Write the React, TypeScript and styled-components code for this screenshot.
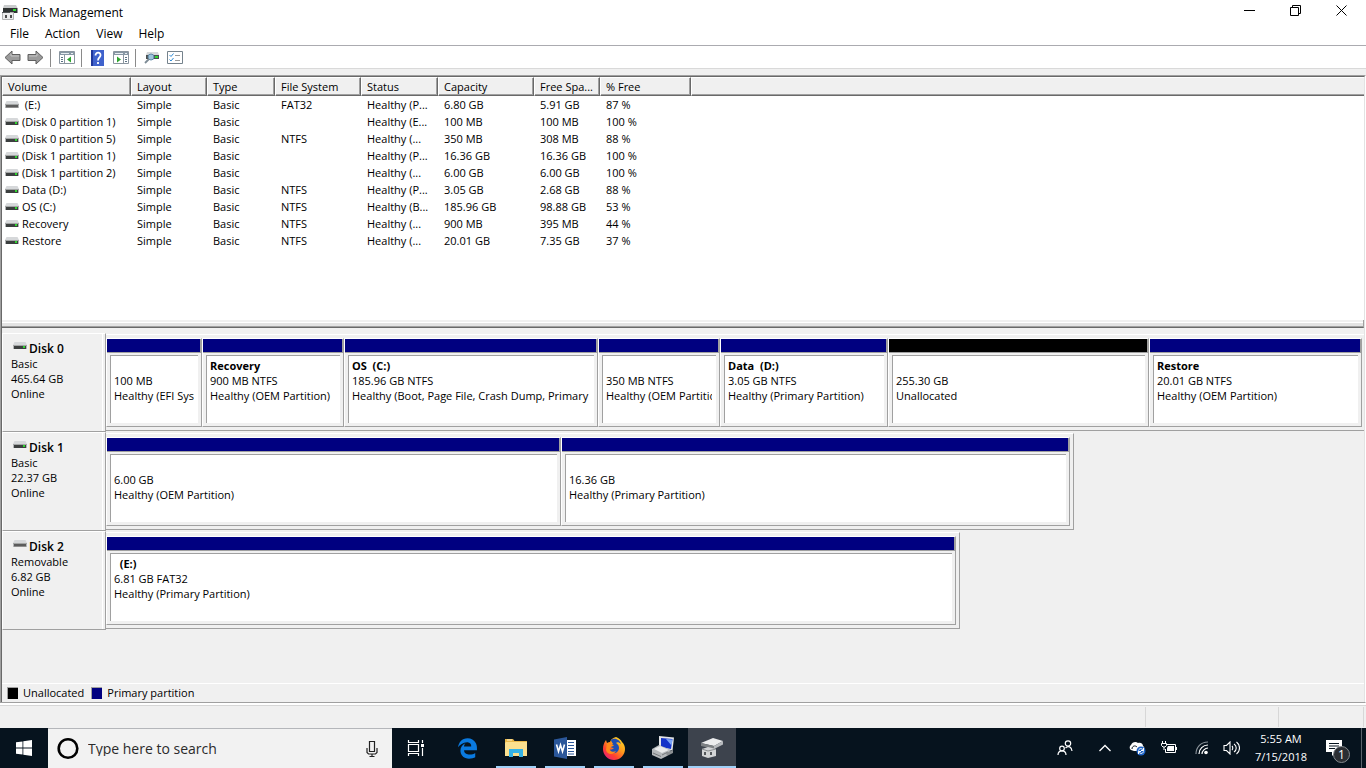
import React from "react";
import styled, { createGlobalStyle, css } from "styled-components";
import { FaEdgeLegacy } from "react-icons/fa6";

const FACE = "#f0f0f0";
const SHADOW = "#a0a0a0";
const DARK = "#696969";
const LIGHT = "#e3e3e3";
const NAVY = "#000080";

const GlobalStyle = createGlobalStyle`
  *, *::before, *::after { box-sizing: border-box; }
  body {
    margin: 0;
    background: ${FACE};
    color: #000;
    font: 11px/15px "Open Sans", "Noto Sans", sans-serif;
  }
  button, input { font: inherit; color: inherit; border: 0; padding: 0; background: none; }
  svg { display: block; }
`;

const Screen = styled.div`
  display: flex;
  flex-direction: column;
  min-height: 100vh;
`;

/* Title bar */
const TitleBar = styled.header`
  display: flex;
  align-items: center;
  height: 24px;
  padding: 0 2px;
  background: #fff;
`;
const Title = styled.h1`
  flex: 1;
  margin: 0 0 0 4px;
  font-size: 12px;
  font-weight: 400;
`;
const CaptionButton = styled.button`
  display: grid;
  place-items: center;
  width: 46px;
  height: 20px;
  margin-bottom: 4px;
`;

/* Menu and toolbar */
const MenuBar = styled.nav`
  display: flex;
  height: 22px;
  padding-left: 2px;
  background: #fff;
  border-bottom: 1px solid #ababb0;
`;
const MenuItem = styled.button`
  padding: 0 8px 2px;
  font-size: 12px;
`;
const Toolbar = styled.div`
  display: flex;
  align-items: center;
  height: 23px;
  padding: 1px 0 0 1px;
  background: #fff;
  border-bottom: 1px solid #d9d9d9;
`;
const ToolButton = styled.button`
  display: grid;
  place-items: center;
  width: 23px;
  height: 22px;
`;
const ToolSeparator = styled.span`
  width: 1px;
  height: 18px;
  margin: 0 4px 0 3px;
  background: #8a8a8a;
`;

/* Framed content */
const Frame = styled.main`
  flex: 1;
  display: flex;
  margin-top: 6px;
  border: solid;
  border-width: 1px;
  border-color: ${SHADOW} #fff ${SHADOW} ${SHADOW};
`;
const FrameInner = styled.div`
  flex: 1;
  min-width: 0;
  display: flex;
  flex-direction: column;
  border: solid;
  border-width: 1px 1px 0;
  border-color: ${DARK} ${LIGHT} ${LIGHT} ${DARK};
`;
const ListPane = styled.section`
  min-height: 243px;
  background: #fff;
`;
const Splitter = styled.div`
  height: 8px;
  margin-bottom: 5px;
  border-right: 1px solid ${SHADOW};
  border-bottom: 1px solid ${DARK};
  background: linear-gradient(${FACE} 0 2px, #fff 2px 3px, ${LIGHT} 3px 6px, ${SHADOW} 6px);
`;

/* Volume table */
const VolumeTable = styled.table`
  width: 100%;
  table-layout: fixed;
  border-collapse: separate;
  border-spacing: 0;
`;
const Column = styled.col<{ $width?: number }>`
  width: ${(p) => (p.$width ? `${p.$width}px` : "auto")};
`;
const HeaderCell = styled.th`
  height: 19px;
  padding: 0 0 1px 5px;
  overflow: hidden;
  text-align: left;
  font-weight: 400;
  white-space: nowrap;
  background: ${FACE};
  border-top: 1px solid #fff;
  border-left: 1px solid #fff;
  border-right: 1px solid ${DARK};
  border-bottom: 1px solid ${DARK};
  box-shadow: inset -1px -1px ${SHADOW};
  &:last-child { border-right: 0; box-shadow: inset 0 -1px ${SHADOW}; }
`;
const Cell = styled.td`
  height: 17px;
  padding: 0 0 0 6px;
  overflow: hidden;
  white-space: nowrap;
  &:first-child { padding-left: 3px; }
`;
const VolumeName = styled.span`
  display: flex;
  align-items: center;
  gap: 3px;
  white-space: pre;
`;

/* Disk map */
const DiskPane = styled.section`
  flex: 1;
  display: flex;
  flex-direction: column;
  background: ${FACE};
`;
const DiskRow = styled.article<{ $share: number; $spare: number }>`
  display: grid;
  grid-template-columns: 104px minmax(0, ${(p) => p.$share}fr) ${(p) => p.$spare > 0 && `minmax(0, ${p.$spare}fr)`};
  height: 99px;
`;
const DiskHead = styled.div`
  padding: 7px 0 0 8px;
  border: 1px solid #fff;
  border-right-color: ${SHADOW};
  border-bottom-color: ${SHADOW};
  box-shadow: inset -2px 0 ${FACE}, inset -3px 0 #fff;
`;
const DiskTitle = styled.h2`
  display: flex;
  gap: 2px;
  margin: 0;
  padding-left: 2px;
  font-size: 12px;
  font-weight: 600;
  svg { margin-top: 1px; }
`;
const HeadLine = styled.div``;
const Graph = styled.div<{ $columns: string; $full: boolean }>`
  display: grid;
  grid-template-columns: ${(p) => p.$columns};
  height: 97px;
  margin-top: 1px;
  padding: 3px 3px 3px 0;
  border-top: 1px solid #fff;
  border-right: 1px solid ${SHADOW};
  border-bottom: 1px solid ${SHADOW};
  ${(p) => p.$full && css`border-right: 0; padding-right: 2px;`}
`;
const Partition = styled.div`
  min-width: 0;
  display: flex;
  flex-direction: column;
  border: 1px solid #fff;
  border-right-color: ${SHADOW};
  border-bottom-color: ${SHADOW};
`;
const Bar = styled.div<{ $color: string }>`
  height: 14px;
  background: ${(p) => p.$color};
  border-right: 1px solid ${SHADOW};
  border-bottom: 1px solid ${SHADOW};
`;
const Box = styled.div`
  flex: 1;
  margin: 2px 3px 3px;
  padding: 2px 4px 0 3px;
  background: #fff;
  border-top: 1px solid ${SHADOW};
  border-left: 1px solid ${SHADOW};
`;
const BoxLine = styled.div<{ $bold?: boolean }>`
  height: 15px;
  overflow: hidden;
  white-space: pre;
  font-weight: ${(p) => (p.$bold ? 700 : 400)};
`;

const Legend = styled.footer`
  display: flex;
  align-items: center;
  height: 19px;
  margin-top: auto;
  padding: 0 0 1px 5px;
  border-top: 1px solid #fff;
`;
const LegendItem = styled.span`
  display: flex;
  align-items: center;
  gap: 5px;
  margin-right: 7px;
`;
const Swatch = styled.span<{ $color: string }>`
  width: 11px;
  height: 12px;
  background: ${(p) => p.$color};
  border: 1px solid ${SHADOW};
  border-width: 1px 0 0 1px;
`;

const StatusBar = styled.div`
  display: flex;
  justify-content: flex-end;
  height: 25px;
  padding: 2px 2px 1px 0;
  border-top: 2px solid #fff;
  box-shadow: inset 0 1px #d7d7d7;
`;
const StatusCell = styled.span<{ $width: number }>`
  width: ${(p) => p.$width}px;
  border-right: 1px solid #d7d7d7;
`;

/* Taskbar */
const Taskbar = styled.footer`
  display: flex;
  height: 40px;
  background: #06131e;
  color: #fff;
`;
const StartButton = styled.button`
  display: grid;
  place-items: center;
  width: 48px;
`;
const Search = styled.label`
  display: flex;
  align-items: center;
  width: 344px;
  padding: 0 13px 0 8px;
  background: #f2f2f2;
  border-top: 1px solid #b4b6ba;
`;
const SearchInput = styled.input`
  flex: 1;
  min-width: 0;
  margin-left: 8px;
  font-size: 14px;
  color: #2b2b2b;
  &::placeholder { color: #2b2b2b; opacity: 1; }
`;
const Apps = styled.div`
  display: flex;
  flex: 1;
  gap: 1px;
`;
const AppButton = styled.button<{ $state?: "open" | "active" }>`
  display: flex;
  flex-direction: column;
  align-items: center;
  justify-content: center;
  width: 48px;
  padding-top: 2px;
  background: ${(p) => (p.$state === "active" ? "#3d434d" : "transparent")};
  &:first-child { margin-right: 2px; }
  &::after {
    content: "";
    order: 2;
    width: ${(p) => (p.$state === "active" ? "48px" : "40px")};
    height: 2px;
    background: ${(p) => (p.$state ? "#9fd0f8" : "transparent")};
  }
`;
const AppIcon = styled.span`
  flex: 1;
  display: grid;
  place-items: center;
`;
const Tray = styled.div`
  display: flex;
  align-items: center;
`;
const TrayButton = styled.button<{ $width: number }>`
  display: grid;
  place-items: center;
  width: ${(p) => p.$width}px;
  height: 40px;
`;
const Clock = styled.time`
  width: 72px;
  text-align: center;
  line-height: 18px;
`;
const ShowDesktop = styled.button`
  align-self: stretch;
  width: 5px;
  border-left: 1px solid #5a636c;
`;

/* Icons */
const DriveIcon = ({ removable = false }: { removable?: boolean }) => (
  <svg width="14" height="8" viewBox="0 0 14 8" aria-hidden="true">
    <path d="M1.500 0h11L14 3H0z" fill="#d6d8da" />
    <path d="M0 3h14v4H0z" fill={removable ? "#5c5c5c" : "#3c3f3f"} />
    <path d="M0 3h14v1H0z" fill="#a4a6a6" />
    <path d="M0 4h1v3H0zM13 4h1v3h-1z" fill="#b4b6b8" />
    {removable ? <path d="M1 6h12v1H1z" fill="#8e8e8e" /> : <path d="M10 4h2v2h-2z" fill="#2fd52f" />}
  </svg>
);

const TitleIcon = () => (
  <svg width="16" height="16" viewBox="0 0 16 16" aria-hidden="true">
    <path d="M2 1h12l1.500 3H1z" fill="#c9cbcc" />
    <path d="M1 4h14.500v5H1z" fill="#2f3232" />
    <path d="M11 5h3v2h-3z" fill="#2fd52f" />
    <path d="M.5 8.500h11v7H.5z" fill="#ececec" stroke="#b2b2b2" />
    <path d="M0 8h8v1H0z" fill="#55585a" />
    <path d="M3 11h2v3H3zM8 11h2v3H8z" fill="#4c4c4c" />
  </svg>
);

const Arrow = ({ flip = false }: { flip?: boolean }) => (
  <svg width="17" height="15" viewBox="0 0 17 15" aria-hidden="true">
    <path
      d={flip ? "M16 7.500L9 1v3.500H1v6h8V14z" : "M1 7.500L8 1v3.500h8v6H8V14z"}
      fill="#9b9b9b"
      stroke="#5f5f5f"
      strokeLinejoin="round"
    />
    <path d={flip ? "M2 6h8V3.500" : "M15 6H7V3.500"} fill="none" stroke="#c4c4c4" />
  </svg>
);

const ConsoleIcon = ({ flip = false }: { flip?: boolean }) => (
  <svg width="16" height="13" viewBox="0 0 16 13" aria-hidden="true">
    <path d="M.5.5h15v12H.5z" fill="#fff" stroke="#8a959f" />
    <path d="M1 1h14v3H1z" fill="#8797a4" />
    <path d="M2 2.500h8M12 2.500h2" stroke="#e8edf1" />
    <path d={flip ? "M10.500 4v8" : "M5.500 4v8"} stroke="#8a959f" />
    <path d={flip ? "M12 6.500h2M12 8.500h2M12 10.500h2" : "M2 6.500h2M2 8.500h2M2 10.500h2"} stroke="#5b7385" />
    <path d={flip ? "M4 5.500l4 3-4 3z" : "M12 5.500l-4 3 4 3z"} fill="#2ea52e" />
  </svg>
);

const HelpIcon = () => (
  <svg width="13" height="16" viewBox="0 0 13 16" aria-hidden="true">
    <path d="M0 0h13v16H0z" fill="#3f62cc" />
    <path d="M0 0h2v16H0z" fill="#20379a" />
    <path d="M4.500 5.500c0-4 5.500-3.500 5 0-.2 2-2.500 2-2.500 5M7 12v2" fill="none" stroke="#fff" strokeWidth="1.800" />
  </svg>
);

const RescanIcon = () => (
  <svg width="16" height="13" viewBox="0 0 16 13" aria-hidden="true">
    <path d="M3 1h11l1 3H2z" fill="#d5d8da" />
    <path d="M2 4h13v4H2z" fill="#4b4f50" />
    <path d="M11 5h3v2h-3z" fill="#2fd52f" />
    <circle cx="7" cy="6" r="3" fill="#9ec4dc" stroke="#5d87a5" />
    <path d="M5 8l-4 4" stroke="#7d8b95" strokeWidth="1.800" />
  </svg>
);

const SettingsListIcon = () => (
  <svg width="16" height="13" viewBox="0 0 16 13" aria-hidden="true">
    <path d="M.5.5h15v12H.5z" fill="#fff" stroke="#75828c" />
    <path d="M2.500 4l1.500 1.500L6.500 2.500M2.500 8.500L4 10l2.500-3" fill="none" stroke="#2f8bd6" />
    <path d="M8 4.500h5M8 9.500h5" stroke="#9a9a9a" />
  </svg>
);

const ExplorerIcon = () => (
  <svg width="22" height="20" viewBox="0 0 22 20" aria-hidden="true">
    <path d="M0 1h8l1.500 2H22v15H0z" fill="#e9b84a" />
    <path d="M1 4h21v14H0V5z" fill="#fbe08f" />
    <path d="M2 2h5" stroke="#fff4cc" />
    <path d="M4 19v-8h14v8h-4v-4H8v4z" fill="#35b3e6" />
  </svg>
);

const WordIcon = () => (
  <svg width="22" height="22" viewBox="0 0 22 22" aria-hidden="true">
    <path d="M11 3h11v16H11z" fill="#fff" />
    <path d="M14 5.500h6M14 8.500h6M14 11.500h6M14 14.500h6M14 17h6" stroke="#2b579a" />
    <path d="M0 2.500L13 0v22L0 19.500z" fill="#2b579a" />
    <path d="M2.500 7.500l2 7 2-6.500 2 6.500 2-7" fill="none" stroke="#fff" strokeWidth="1.600" />
  </svg>
);

const FirefoxIcon = () => (
  <svg width="24" height="24" viewBox="0 0 24 24" aria-hidden="true">
    <defs>
      <linearGradient id="fox" x1="1" y1="0" x2="0.200" y2="1">
        <stop offset="0" stopColor="#ffe92b" />
        <stop offset="0.450" stopColor="#ff9a1c" />
        <stop offset="0.750" stopColor="#ff4030" />
        <stop offset="1" stopColor="#e6207a" />
      </linearGradient>
    </defs>
    <path d="M14 1c3 1 5 3 6 5 2 2 3 4 3 7a11 11 0 0 1-22 0c0-4 1-6 3-9l1 3 3-1c1-3 3-4 6-5z" fill="url(#fox)" />
    <path d="M9 4c4-3 9 0 10 4-2-2-4-2-5-1 3 2 4 5 2 8-3 4-9 2-9-2 1 1 3 1 5-1-3 0-4-1-3-3l2-1c-1-2-2-3-2-4z" fill="#1f4fb4" />
    <path d="M5 7l4-1c0 2 1 3 3 3-1 2-3 1-4 3-1 3 3 5 6 3-2 4-9 4-10-1z" fill="#ff8a1a" />
  </svg>
);

const ComputerIcon = () => (
  <svg width="24" height="24" viewBox="0 0 24 24" aria-hidden="true">
    <path d="M8 0l15 1.500-1.500 13L8 12z" fill="#e4e6e8" />
    <path d="M10 2l11.500 1-1.500 10-10-2z" fill="#1533c8" />
    <path d="M15 3l6.500.5-1 6z" fill="#7aa4f5" />
    <path d="M1 13l7-4 12 5-4 6-6 3-9-4z" fill="#b4b8bb" />
    <path d="M3 13l6-3 9 4-7 3z" fill="#e9ebec" />
    <path d="M2 17l8 3.500M11 19l6-3" stroke="#75797c" />
    <path d="M15 17l7-3v3l-6 3z" fill="#8c9093" />
  </svg>
);

const DiskAppIcon = () => (
  <svg width="24" height="22" viewBox="0 0 24 22" aria-hidden="true">
    <path d="M1 6l12-5 10 3-9 5z" fill="#ecedee" />
    <path d="M1 6l13 3v3L1 9z" fill="#7d8184" />
    <path d="M14 9l9-5v3.500L14 12z" fill="#b7babd" />
    <path d="M2 12l6-2 8 2v7l-8 2-6-2z" fill="#d2d4d6" />
    <path d="M2 12l6 2 8-2" fill="none" stroke="#8b8f92" />
    <path d="M4 15h2v3H4zM10 15h2v3h-2z" fill="#54585b" />
  </svg>
);

/* Data */
const columns: [string, number?][] = [
  ["Volume", 129],
  ["Layout", 76],
  ["Type", 68],
  ["File System", 86],
  ["Status", 77],
  ["Capacity", 96],
  ["Free Spa...", 66],
  ["% Free", 91],
  [""],
];

const volumes = [
  [" (E:)", "FAT32", "Healthy (P...", "6.80 GB", "5.91 GB", "87 %"],
  ["(Disk 0 partition 1)", "", "Healthy (E...", "100 MB", "100 MB", "100 %"],
  ["(Disk 0 partition 5)", "NTFS", "Healthy (...", "350 MB", "308 MB", "88 %"],
  ["(Disk 1 partition 1)", "", "Healthy (P...", "16.36 GB", "16.36 GB", "100 %"],
  ["(Disk 1 partition 2)", "", "Healthy (...", "6.00 GB", "6.00 GB", "100 %"],
  ["Data (D:)", "NTFS", "Healthy (P...", "3.05 GB", "2.68 GB", "88 %"],
  ["OS (C:)", "NTFS", "Healthy (B...", "185.96 GB", "98.88 GB", "53 %"],
  ["Recovery", "NTFS", "Healthy (...", "900 MB", "395 MB", "44 %"],
  ["Restore", "NTFS", "Healthy (...", "20.01 GB", "7.35 GB", "37 %"],
];

interface PartitionData {
  share: number;
  name: string;
  size: string;
  status: string;
  free?: boolean;
}
interface DiskData {
  name: string;
  kind: string;
  size: string;
  share: number;
  partitions: PartitionData[];
}

const FULL_SHARE = 1258;

const disks: DiskData[] = [
  {
    name: "Disk 0",
    kind: "Basic",
    size: "465.64 GB",
    share: FULL_SHARE,
    partitions: [
      { share: 96, name: "", size: "100 MB", status: "Healthy (EFI System Partition)" },
      { share: 142, name: "Recovery", size: "900 MB NTFS", status: "Healthy (OEM Partition)" },
      { share: 254, name: "OS  (C:)", size: "185.96 GB NTFS", status: "Healthy (Boot, Page File, Crash Dump, Primary Partition)" },
      { share: 122, name: "", size: "350 MB NTFS", status: "Healthy (OEM Partition)" },
      { share: 168, name: "Data  (D:)", size: "3.05 GB NTFS", status: "Healthy (Primary Partition)" },
      { share: 261, name: "", size: "255.30 GB", status: "Unallocated", free: true },
      { share: 213, name: "Restore", size: "20.01 GB NTFS", status: "Healthy (OEM Partition)" },
    ],
  },
  {
    name: "Disk 1",
    kind: "Basic",
    size: "22.37 GB",
    share: 968,
    partitions: [
      { share: 455, name: "", size: "6.00 GB", status: "Healthy (OEM Partition)" },
      { share: 509, name: "", size: "16.36 GB", status: "Healthy (Primary Partition)" },
    ],
  },
  {
    name: "Disk 2",
    kind: "Removable",
    size: "6.82 GB",
    share: 854,
    partitions: [{ share: 850, name: "  (E:)", size: "6.81 GB FAT32", status: "Healthy (Primary Partition)" }],
  },
];

const Disk = ({ disk }: { disk: DiskData }) => (
  <DiskRow $share={disk.share} $spare={FULL_SHARE - disk.share}>
    <DiskHead>
      <DiskTitle>
        <DriveIcon removable={disk.kind === "Removable"} />
        {disk.name}
      </DiskTitle>
      <HeadLine>{disk.kind}</HeadLine>
      <HeadLine>{disk.size}</HeadLine>
      <HeadLine>Online</HeadLine>
    </DiskHead>
    <Graph
      $columns={disk.partitions.map((p) => `minmax(0, ${p.share}fr)`).join(" ")}
      $full={disk.share === FULL_SHARE}
    >
      {disk.partitions.map((p, i) => (
        <Partition key={i}>
          <Bar $color={p.free ? "#000" : NAVY} />
          <Box>
            <BoxLine $bold>{p.name}</BoxLine>
            <BoxLine>{p.size}</BoxLine>
            <BoxLine>{p.status}</BoxLine>
          </Box>
        </Partition>
      ))}
    </Graph>
  </DiskRow>
);

export default function App() {
  return (
    <Screen>
      <GlobalStyle />
      <TitleBar>
        <TitleIcon />
        <Title>Disk Management</Title>
        <CaptionButton aria-label="Minimize">
          <svg width="11" height="11" viewBox="0 0 11 11" stroke="#000"><path d="M0 5.500h11" /></svg>
        </CaptionButton>
        <CaptionButton aria-label="Restore">
          <svg width="11" height="11" viewBox="0 0 11 11" fill="none" stroke="#000">
            <path d="M.5 2.500h8v8h-8zM2.500 2.500v-2h8v8h-2" />
          </svg>
        </CaptionButton>
        <CaptionButton aria-label="Close">
          <svg width="11" height="11" viewBox="0 0 11 11" stroke="#000"><path d="M.5.5l10 10M10.500.5l-10 10" /></svg>
        </CaptionButton>
      </TitleBar>
      <MenuBar aria-label="Menu">
        {["File", "Action", "View", "Help"].map((m) => <MenuItem key={m}>{m}</MenuItem>)}
      </MenuBar>
      <Toolbar role="toolbar" aria-label="Tools">
        <ToolButton aria-label="Back"><Arrow /></ToolButton>
        <ToolButton aria-label="Forward"><Arrow flip /></ToolButton>
        <ToolSeparator />
        <ToolButton aria-label="Show console tree"><ConsoleIcon /></ToolButton>
        <ToolSeparator />
        <ToolButton aria-label="Help"><HelpIcon /></ToolButton>
        <ToolButton aria-label="Show action pane"><ConsoleIcon flip /></ToolButton>
        <ToolSeparator />
        <ToolButton aria-label="Rescan disks"><RescanIcon /></ToolButton>
        <ToolButton aria-label="Settings"><SettingsListIcon /></ToolButton>
      </Toolbar>

      <Frame>
        <FrameInner>
          <ListPane>
            <VolumeTable>
              <colgroup>
                {columns.map(([label, width]) => <Column key={label} $width={width} />)}
              </colgroup>
              <thead>
                <tr>{columns.map(([label]) => <HeaderCell key={label}>{label}</HeaderCell>)}</tr>
              </thead>
              <tbody>
                {volumes.map(([name, ...rest], i) => (
                  <tr key={name}>
                    <Cell><VolumeName><DriveIcon removable={i === 0} />{name}</VolumeName></Cell>
                    <Cell>Simple</Cell>
                    <Cell>Basic</Cell>
                    {rest.map((value, j) => <Cell key={j}>{value}</Cell>)}
                    <Cell />
                  </tr>
                ))}
              </tbody>
            </VolumeTable>
          </ListPane>
          <Splitter />
          <DiskPane>
            {disks.map((d) => <Disk key={d.name} disk={d} />)}
            <Legend>
              <LegendItem><Swatch $color="#000" />Unallocated</LegendItem>
              <LegendItem><Swatch $color={NAVY} />Primary partition</LegendItem>
            </Legend>
          </DiskPane>
        </FrameInner>
      </Frame>
      <StatusBar>
        <StatusCell $width={133} />
        <StatusCell $width={133} />
        <StatusCell $width={85} />
      </StatusBar>

      <Taskbar>
        <StartButton aria-label="Start">
          <svg width="16" height="16" viewBox="0 0 16 16" fill="#fff">
            <path d="M0 2.300l6.500-.9v6.200H0zM7.300 1.300L16 0v7.600H7.300zM0 8.400h6.500v6.200L0 13.700zM7.300 8.400H16V16l-8.700-1.300z" />
          </svg>
        </StartButton>
        <Search>
          <svg width="24" height="24" viewBox="0 0 24 24" fill="none" stroke="#000" strokeWidth="2.600" aria-hidden="true">
            <circle cx="12" cy="11.500" r="9.300" />
          </svg>
          <SearchInput type="text" aria-label="Search" placeholder="Type here to search" />
          <svg width="14" height="18" viewBox="0 0 14 18" fill="none" stroke="#222" strokeWidth="1.200" aria-hidden="true">
            <path d="M4.500 1.500h5v10h-5zM2 8v4.500l1.500 1.500h7l1.500-1.500V8M7 14v2.500M4.500 16.500h5" />
          </svg>
        </Search>
        <Apps>
          <AppButton aria-label="Task view">
            <AppIcon>
              <svg width="18" height="16" viewBox="0 0 18 16" fill="none" stroke="#fff" strokeWidth="1.200" aria-hidden="true">
                <path d="M1.500 4.500h10v7h-10zM1.500 0v2.500h10V0M1.500 16v-2.500h10V16M15.500 0v3M15.500 8v8" />
                <path d="M14 4h3v3h-3z" fill="#fff" stroke="none" />
              </svg>
            </AppIcon>
          </AppButton>
          <AppButton aria-label="Edge"><AppIcon><FaEdgeLegacy size={21} color="#0a7ae0" /></AppIcon></AppButton>
          <AppButton aria-label="File Explorer" $state="open"><AppIcon><ExplorerIcon /></AppIcon></AppButton>
          <AppButton aria-label="Word" $state="open"><AppIcon><WordIcon /></AppIcon></AppButton>
          <AppButton aria-label="Firefox" $state="open"><AppIcon><FirefoxIcon /></AppIcon></AppButton>
          <AppButton aria-label="Computer Management" $state="open"><AppIcon><ComputerIcon /></AppIcon></AppButton>
          <AppButton aria-label="Disk Management" $state="active"><AppIcon><DiskAppIcon /></AppIcon></AppButton>
        </Apps>
        <Tray>
          <TrayButton $width={44} aria-label="People">
            <svg width="16" height="16" viewBox="0 0 16 16" fill="none" stroke="#fff" strokeWidth="1.200">
              <circle cx="11" cy="3.500" r="2.700" />
              <circle cx="5" cy="8.500" r="2.300" />
              <path d="M1 15c0-5.500 8-5.500 8 0M8.500 8c3-3 6-1 6.500 3" />
            </svg>
          </TrayButton>
          <TrayButton $width={36} aria-label="Show hidden icons">
            <svg width="12" height="8" viewBox="0 0 12 8" fill="none" stroke="#fff" strokeWidth="1.300"><path d="M.5 7L6 1.500 11.500 7" /></svg>
          </TrayButton>
          <TrayButton $width={28} aria-label="OneDrive">
            <svg width="17" height="15" viewBox="0 0 17 15">
              <path d="M2 9a3 3 0 0 1 0-5C3 1 7 0 9 2c3-1 5 1 5 3 2 1 2 5-1 5H5z" fill="#fff" />
              <path d="M3 8c0-3 3-4 5-2" fill="none" stroke="#06131e" />
              <circle cx="12" cy="10" r="4.500" fill="#1d62c4" />
              <path d="M9.500 9.500c1-3 4-2 5 0M14.500 10.500c-1 3-4 2-5 0M14.500 7v2.500H12M9.500 13v-2.500H12" fill="none" stroke="#fff" />
            </svg>
          </TrayButton>
          <TrayButton $width={36} aria-label="Battery">
            <svg width="17" height="14" viewBox="0 0 17 14" fill="none" stroke="#fff">
              <path d="M6 3.500h8.500v8h-10V8M15.500 6v3" />
              <path d="M7 5h6v5H6V7z" fill="#fff" stroke="none" />
              <path d="M1.500 0v2M4.500 0v2M.5 2.500h5v2L4 6H2L.5 4.500zM3 6v3" />
            </svg>
          </TrayButton>
          <TrayButton $width={30} aria-label="Network">
            <svg width="14" height="14" viewBox="0 0 14 14" fill="none" stroke="#fff" strokeWidth="1.200">
              <path d="M1 13C1 6 6 1 13 1" stroke="#8b949b" />
              <path d="M4 13c0-5 4-9 9-9M7 13c0-3 3-6 6-6" />
              <circle cx="11" cy="11.500" r="1.800" fill="#fff" stroke="none" />
            </svg>
          </TrayButton>
          <TrayButton $width={28} aria-label="Volume">
            <svg width="17" height="14" viewBox="0 0 17 14" fill="none" stroke="#fff" strokeWidth="1.100">
              <path d="M1 4.500h2.500L7 1v12L3.500 9.500H1zM9 5c1 1 1 3 0 4M11 3c3 2 3 6 0 8M13.500 1c4 3 4 9 0 12" />
            </svg>
          </TrayButton>
          <Clock dateTime="2018-07-15T05:55">5:55 AM<br />7/15/2018</Clock>
          <TrayButton $width={44} aria-label="Notifications">
            <svg width="26" height="30" viewBox="0 0 26 30">
              <path d="M0 7h16v12h-6l-4 4v-4H0z" fill="#fff" />
              <path d="M3 10.500h10M3 13h10M3 15.500h6" stroke="#06131e" />
              <circle cx="15.500" cy="21.500" r="8" fill="#2b2e33" stroke="#858a8f" />
              <text x="15.500" y="26" fill="#fff" fontSize="12" textAnchor="middle">1</text>
            </svg>
          </TrayButton>
          <ShowDesktop aria-label="Show desktop" />
        </Tray>
      </Taskbar>
    </Screen>
  );
}
